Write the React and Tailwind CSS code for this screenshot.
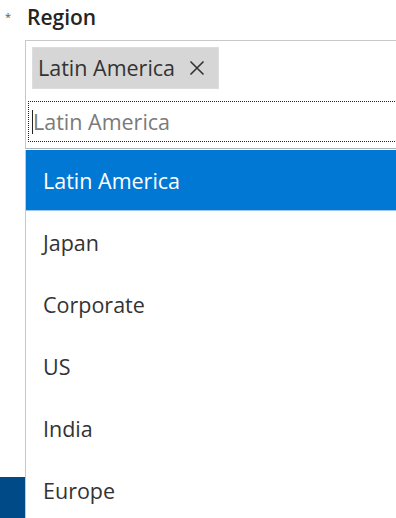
export default function App() {
  const items = ["Japan", "Corporate", "US", "India", "Europe"];
  return (
    <div
      className="w-[396px] h-[518px] overflow-hidden bg-white relative"
      style={{ fontFamily: '"Open Sans", "Noto Sans", sans-serif' }}
    >
      <div className="h-[40px] flex items-start">
        <span className="w-[27px] pl-[5px] pt-[11px] text-[11px] text-[#555] leading-none">*</span>
        <span className="pt-[2px] text-[21px] font-semibold text-[#252423] leading-[30px]">Region</span>
      </div>
      <div className="flex h-[478px]">
        <div className="w-[25px] flex flex-col justify-end shrink-0">
          <div className="h-[41px] bg-[#004a88]" />
        </div>
        <div className="w-[400px] shrink-0 flex flex-col">
          <div className="border-l border-t border-b border-[#c8c8c8] border-b-[#a9b3bf] pt-[6px] pb-[6px]">
            <div className="pl-[6px]">
              <div className="inline-flex items-center h-[42px] bg-[#d6d6d6] border border-[#dcdcdc] pl-[5px] pr-[13px] gap-[14px]">
                <span className="text-[21.5px] text-[#333] leading-none">Latin America</span>
                <svg width="16" height="16" viewBox="0 0 16 16">
                  <path d="M1.5 1.5 L14.5 14.5 M14.5 1.5 L1.5 14.5" stroke="#333" strokeWidth="1.6" />
                </svg>
              </div>
            </div>
            <div className="mt-[12px] ml-[2px] h-[41px] border border-dotted border-[#222] flex items-center pl-[3px]">
              <span className="w-[1px] h-[24px] bg-[#222]" />
              <span className="text-[21.5px] text-[#7a7a7a] leading-none">Latin America</span>
            </div>
          </div>
          <div className="flex-1 border-l border-[#c8c8c8] mt-[1px]">
            <div className="h-[61px] bg-[#0078d4] border-b border-[#9cc8ef] flex items-center pl-[17px] pt-[2px]">
              <span className="text-[21.5px] text-white leading-none">Latin America</span>
            </div>
            {items.map((t) => (
              <div key={t} className="h-[62px] flex items-center pl-[17px] pt-[2px]">
                <span className="text-[21.5px] text-[#333] leading-none">{t}</span>
              </div>
            ))}
          </div>
        </div>
      </div>
    </div>
  );
}
